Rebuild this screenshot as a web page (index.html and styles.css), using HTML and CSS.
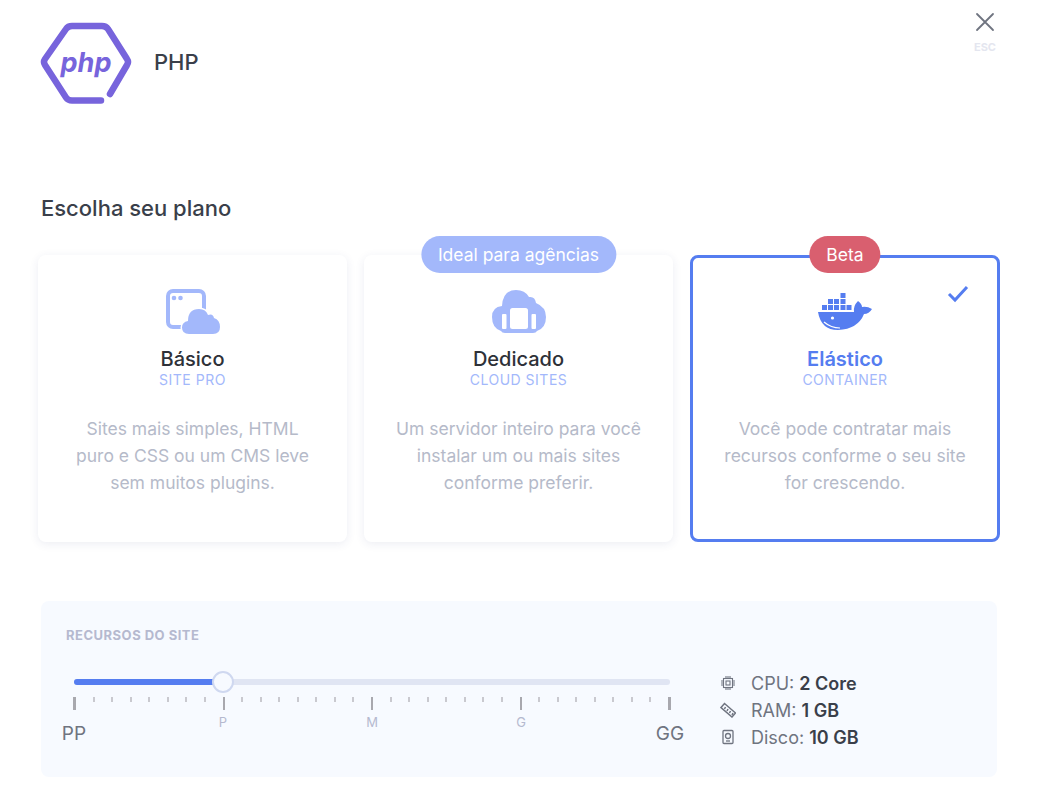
FILE: index.html
```html
<!DOCTYPE html>
<html lang="en">
<head>
    <meta charset="UTF-8">
    <meta name="viewport" content="width=device-width, initial-scale=1.0">
    <title>Escolha seu plano</title>
    <link rel="stylesheet" href="styles.css">
</head>
<body>
    <div class="header">
        <div class="app">
            <svg class="app-logo" width="92" height="84" viewBox="0 0 92 84">
                <path d="M61 78.500H32Q28 78.500 26 75.500L5 43Q3 40 5 37L26 7Q28 4 32 4H62Q66 4 68 7L87 37Q89 40 87 43L70 72" fill="none" stroke="#7764dc" stroke-width="6.500" stroke-linecap="round" stroke-linejoin="round"/>
                <text class="app-logo-text" x="46" y="50" text-anchor="middle">php</text>
            </svg>
            <span class="app-name">PHP</span>
        </div>
        <div class="close">
            <svg width="20" height="20" viewBox="0 0 20 20">
                <path d="M2 2L18 18M18 2L2 18" stroke="#6f7480" stroke-width="1.800" stroke-linecap="round"/>
            </svg>
            <span class="close-label">ESC</span>
        </div>
    </div>

    <h1 class="title">Escolha seu plano</h1>

    <div class="plans">
        <div class="plan">
            <svg class="plan-icon" width="54" height="46" viewBox="0 0 54 46">
                <rect x="2" y="2" width="36" height="36" rx="5" fill="none" stroke="#a3b8fb" stroke-width="4"/>
                <circle cx="8" cy="9" r="2.300" fill="#a3b8fb"/>
                <circle cx="14.500" cy="9" r="2.300" fill="#a3b8fb"/>
                <path d="M23 45Q16 45 16 38.500Q16 33 22 32Q22 20 33 20Q40 20 42 26Q47 24 48 29Q54 31 54 38Q54 45 47 45Z" fill="#a3b8fb" stroke="#fff" stroke-width="3" paint-order="stroke"/>
            </svg>
            <div class="plan-name">Básico</div>
            <div class="plan-type">SITE PRO</div>
            <p class="plan-desc">Sites mais simples, HTML puro e CSS ou um CMS leve sem muitos plugins.</p>
        </div>

        <div class="plan">
            <span class="badge badge-blue">Ideal para agências</span>
            <svg class="plan-icon" width="54" height="46" viewBox="0 0 54 46">
                <path d="M9 42Q0 39 0 28Q0 18 10 17Q11 1 24 1Q33 1 37 8Q43 7 44 14Q54 18 54 28Q54 39 45 42Q44 44 41 44H13Q10 44 9 42Z" fill="#a3b8fb"/>
                <rect x="18" y="19" width="18" height="21" rx="2.500" fill="#fff"/>
                <rect x="10" y="25" width="4.500" height="15" rx="1" fill="#fff"/>
                <rect x="39.500" y="25" width="4.500" height="15" rx="1" fill="#fff"/>
            </svg>
            <div class="plan-name">Dedicado</div>
            <div class="plan-type">CLOUD SITES</div>
            <p class="plan-desc">Um servidor inteiro para você instalar um ou mais sites conforme preferir.</p>
        </div>

        <div class="plan plan-selected">
            <span class="badge badge-red">Beta</span>
            <svg class="plan-check" width="22" height="18" viewBox="0 0 22 18">
                <path d="M2 9L8 15L20 2" fill="none" stroke="#557df0" stroke-width="3"/>
            </svg>
            <svg class="plan-icon" width="54" height="46" viewBox="0 0 54 46">
                <g fill="#557df0">
                    <rect x="22.500" y="4" width="5" height="5"/>
                    <rect x="10" y="10" width="5" height="5"/>
                    <rect x="16" y="10" width="5" height="5"/>
                    <rect x="22.500" y="10" width="5" height="5"/>
                    <rect x="4" y="16" width="5" height="5"/>
                    <rect x="10" y="16" width="5" height="5"/>
                    <rect x="16" y="16" width="5" height="5"/>
                    <rect x="22.500" y="16" width="5" height="5"/>
                    <rect x="28.500" y="16" width="5" height="5"/>
                    <path d="M0 23H36Q35 17 40 12Q44 15 44 18Q49 17 54 20Q51 25 46 25Q40 40 20 41Q3 41 0 23Z"/>
                </g>
                <circle cx="14.500" cy="29" r="1.600" fill="#fff"/>
                <path d="M6 33Q13 39 22 39" fill="none" stroke="#fff" stroke-width="1.200"/>
            </svg>
            <div class="plan-name plan-name-selected">Elástico</div>
            <div class="plan-type">CONTAINER</div>
            <p class="plan-desc">Você pode contratar mais recursos conforme o seu site for crescendo.</p>
        </div>
    </div>

    <div class="resources">
        <div class="resources-title">RECURSOS DO SITE</div>
        <div class="resources-body">
            <div class="slider">
                <div class="track">
                    <div class="track-fill" style="width: 25%"></div>
                    <div class="thumb" style="left: 25%"></div>
                </div>
                <div class="ticks" id="ticks"></div>
                <div class="marks">
                    <span class="mark mark-end">PP</span>
                    <span class="mark">P</span>
                    <span class="mark">M</span>
                    <span class="mark">G</span>
                    <span class="mark mark-end">GG</span>
                </div>
            </div>
            <div class="specs">
                <div class="spec">
                    <svg width="16" height="16" viewBox="0 0 16 16" fill="none" stroke="#6f7480" stroke-width="1.100">
                        <rect x="3.500" y="3.500" width="9" height="9"/>
                        <rect x="6" y="6" width="4" height="4"/>
                        <path d="M6 1V3M8 1V3M10 1V3M6 13V15M8 13V15M10 13V15M1 6H3M1 8H3M1 10H3M13 6H15M13 8H15M13 10H15"/>
                    </svg>
                    <span>CPU: <b>2 Core</b></span>
                </div>
                <div class="spec">
                    <svg width="16" height="16" viewBox="0 0 16 16" fill="none" stroke="#6f7480" stroke-width="1.500">
                        <path d="M4.500 1.500L15.500 11L12 15L1 5.500Z"/>
                        <path d="M5.500 5L4.500 7M8 7L7 9M10.500 9L9.500 11M13 11L12 13"/>
                    </svg>
                    <span>RAM: <b>1 GB</b></span>
                </div>
                <div class="spec">
                    <svg width="16" height="16" viewBox="0 0 16 16" fill="none" stroke="#6f7480" stroke-width="1.300">
                        <rect x="3" y="1.500" width="10" height="13" rx="1"/>
                        <circle cx="8" cy="7" r="2.500"/>
                        <path d="M6 12H10"/>
                    </svg>
                    <span>Disco: <b>10 GB</b></span>
                </div>
            </div>
        </div>
    </div>

    <script>
        // 33 ticks, every 8th one is a big one
        var ticks = document.getElementById('ticks');
        for (var i = 0; i <= 32; i++) {
            var tick = document.createElement('span');
            tick.className = 'tick';
            if (i % 8 === 0) tick.className += ' tick-major';
            if (i === 0 || i === 32) tick.className += ' tick-end';
            ticks.appendChild(tick);
        }
    </script>
</body>
</html>
```

FILE: styles.css
```css
body {
    margin: 0;
    background-color: white;
    font-family: Inter, "Open Sans", sans-serif;
    color: #2e3138;
}
.header {
    display: flex;
    justify-content: space-between;
    align-items: flex-start;
    padding: 12px 46px 0 40px;
    height: 193px;
    box-sizing: border-box;
}
.app {
    display: flex;
    align-items: center;
    gap: 22px;
    margin-top: 10px;
}
.app-logo-text {
    font-family: Inter, sans-serif;
    font-size: 27px;
    font-weight: 700;
    font-style: italic;
    fill: #7764dc;
}
.app-name {
    margin-bottom: 4px;
    font-size: 22px;
    font-weight: 500;
    color: #3a3f4a;
}
.close {
    display: flex;
    flex-direction: column;
    align-items: center;
    gap: 8px;
}
.close-label {
    font-size: 11px;
    font-weight: 700;
    color: #e4e6ef;
}
.title {
    margin: 0 0 32px 41px;
    font-size: 22px;
    line-height: 30px;
    font-weight: 500;
    color: #3a3f4a;
}
.plans {
    display: grid;
    grid-template-columns: 309px 309px 310px;
    gap: 17px;
    margin-left: 38px;
}
.plan {
    position: relative;
    height: 287px;
    box-sizing: border-box;
    padding: 34px 30px 0;
    border-radius: 8px;
    background-color: white;
    box-shadow: 0 2px 10px rgba(40, 60, 120, 0.09);
    text-align: center;
}
.plan-selected {
    padding: 31px 27px 0;
    border: 3px solid #557df0;
    box-shadow: none;
}
.plan-icon {
    display: block;
    margin: 0 auto;
}
.plan-name {
    margin: 11px 0 -1px;
    font-size: 20px;
    line-height: 27px;
    font-weight: 500;
}
.plan-name-selected {
    color: #557df0;
    font-weight: 600;
}
.plan-type {
    font-size: 14px;
    line-height: 16px;
    letter-spacing: 0.5px;
    color: #a3b8fb;
}
.plan-desc {
    margin: 27px 0 0;
    font-size: 17.5px;
    line-height: 27px;
    color: #b5bac9;
}
.plan-check {
    position: absolute;
    top: 27px;
    right: 28px;
}
.badge {
    position: absolute;
    top: -19px;
    left: 50%;
    transform: translateX(-50%);
    height: 37px;
    line-height: 37px;
    padding: 0 17px;
    border-radius: 19px;
    font-size: 17.5px;
    color: white;
    white-space: nowrap;
}
.plan-selected .badge {
    top: -22px;
}
.badge-blue {
    background-color: #a3b8fb;
}
.badge-red {
    background-color: #d95f6f;
}
.resources {
    margin: 59px 45px 0 41px;
    height: 176px;
    box-sizing: border-box;
    padding: 27px 25px 0;
    border-radius: 8px;
    background-color: #f7faff;
}
.resources-title {
    font-size: 13px;
    line-height: 15px;
    letter-spacing: 0.5px;
    font-weight: 700;
    color: #b5b9cf;
}
.resources-body {
    display: flex;
    align-items: flex-start;
    margin-top: 24px;
}
.slider {
    width: 596px;
    margin-left: 8px;
    margin-right: 50px;
}
.track {
    position: relative;
    height: 6px;
    margin-top: 12px;
    border-radius: 3px;
    background-color: #e0e5f3;
}
.track-fill {
    height: 100%;
    border-radius: 3px;
    background-color: #557df0;
}
.thumb {
    position: absolute;
    top: -8px;
    width: 22px;
    height: 22px;
    box-sizing: border-box;
    margin-left: -11px;
    border: 2px solid #cfd8f0;
    border-radius: 50%;
    background-color: #f7faff;
}
.ticks {
    display: flex;
    justify-content: space-between;
    align-items: flex-start;
    height: 17px;
    margin: 12px -1px 0 -1px;
}
.tick {
    width: 2px;
    height: 5px;
    background-color: #c9c9cf;
}
.tick-major {
    height: 13px;
    background-color: #a8a8ae;
}
.tick-end {
    width: 3px;
}
.marks {
    display: flex;
    justify-content: space-between;
    align-items: flex-start;
}
.mark {
    display: flex;
    justify-content: center;
    width: 0;
    font-size: 13px;
    line-height: 16px;
    color: #b5b9cf;
}
.mark-end {
    margin-top: 9px;
    font-size: 19px;
    line-height: 22px;
    color: #6f7480;
}
.specs {
    display: flex;
    flex-direction: column;
    gap: 5px;
    margin-top: 5px;
}
.spec {
    display: flex;
    align-items: center;
    gap: 15px;
    height: 22px;
    font-size: 18px;
    color: #6f7480;
}
.spec b {
    font-weight: 600;
    color: #3a3f4a;
}
```
